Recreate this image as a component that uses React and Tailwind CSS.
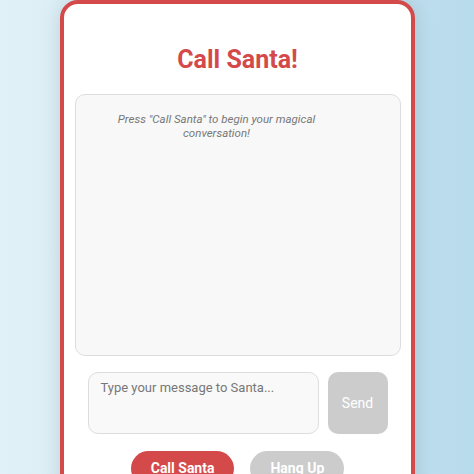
import { useState } from 'react';

export default function App() {
  const [message, setMessage] = useState('');

  return (
    <div className="min-h-screen bg-gradient-to-r from-[#e1f1f7] to-[#b8dbec] font-['Roboto',sans-serif]">
      <div className="mx-auto w-[355px] bg-white border-4 border-[#d44a4a] rounded-[18px] shadow-[0_0_20px_rgba(0,0,0,0.12)] pt-[41px] pb-6 pl-[11px] pr-[10px]">
        <h1 className="text-center text-[25px] leading-[30px] font-bold text-[#d44a4a]">
          Call Santa!
        </h1>

        {/* chat area */}
        <div className="mt-[19px] h-[262px] bg-[#f8f8f8] border border-[#dddddd] rounded-[10px] pt-[17px]">
          <p className="ml-[26px] w-[230px] text-center text-[11.5px] leading-[14px] italic text-[#777777]">
            Press "Call Santa" to begin your magical conversation!
          </p>
        </div>

        {/* input row */}
        <div className="mt-4 mx-[13px] flex gap-[9px]">
          <textarea
            value={message}
            onChange={(e) => setMessage(e.target.value)}
            placeholder="Type your message to Santa..."
            className="w-[231px] h-[62px] resize-none bg-[#f9f9f9] border border-[#dddddd] rounded-[10px] px-3 pt-[7px] text-[13px] leading-[1.2] text-[#333] placeholder:text-[#777777] outline-none"
          />
          <button
            disabled
            className="w-[60px] h-[62px] rounded-[10px] bg-[#cccccc] text-white text-[14px]"
          >
            Send
          </button>
        </div>

        {/* call controls */}
        <div className="mt-[17px] flex justify-center gap-4">
          <button className="rounded-full bg-[#d44a4a] text-white text-[14px] font-bold px-5 py-[7px]">
            Call Santa
          </button>
          <button disabled className="rounded-full bg-[#cccccc] text-white text-[14px] font-bold px-5 py-[7px]">
            Hang Up
          </button>
        </div>
      </div>
    </div>
  );
}
